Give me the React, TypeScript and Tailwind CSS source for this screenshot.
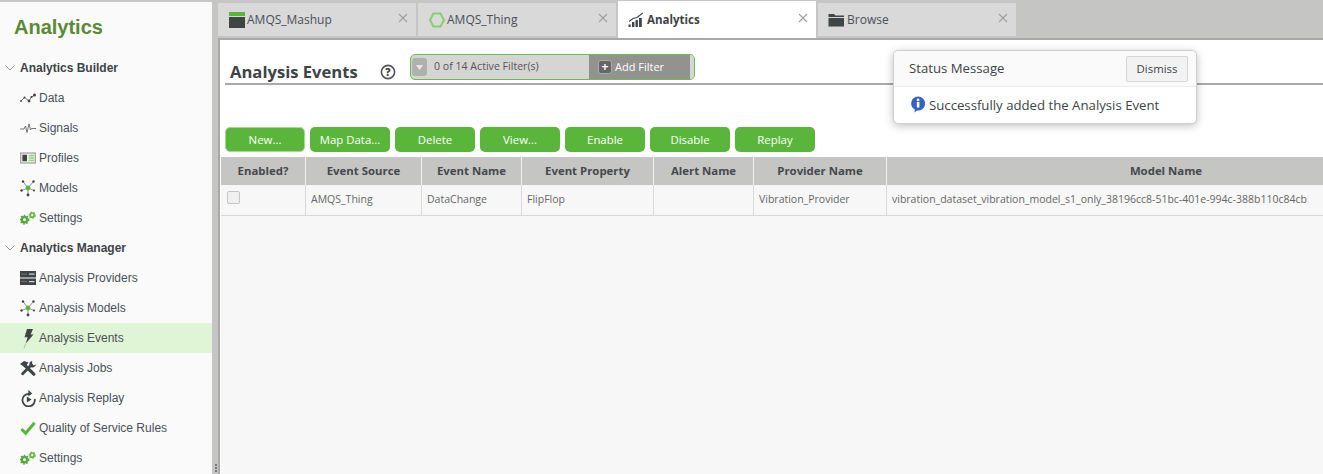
import React from "react";

const G = "#5ab63b";
const D = "#3f4447";

function Gear({ cx, cy, r, c }: { cx: number; cy: number; r: number; c: string }) {
  return (
    <g>
      <circle cx={cx} cy={cy} r={r * 0.62} fill="none" stroke={c} strokeWidth={r * 0.55} />
      <circle cx={cx} cy={cy} r={r * 0.95} fill="none" stroke={c} strokeWidth={r * 0.4} strokeDasharray="1.6 1.6" />
    </g>
  );
}
function Gears() {
  return (
    <svg width="17" height="14" viewBox="0 0 17 14">
      <Gear cx={4.8} cy={8.8} r={4.6} c="#5aa83c" />
      <Gear cx={13} cy={4} r={3.4} c="#6cbb4a" />
    </svg>
  );
}
function Network() {
  return (
    <svg width="16" height="17" viewBox="0 0 16 17">
      <g stroke="#666" strokeWidth="0.7">
        <line x1="8" y1="8" x2="3" y2="1.5" /><line x1="8" y1="8" x2="13.5" y2="1.5" />
        <line x1="8" y1="8" x2="1.5" y2="10.5" /><line x1="8" y1="8" x2="8" y2="15" /><line x1="8" y1="8" x2="14" y2="10.5" />
      </g>
      <circle cx="3" cy="1.5" r="1.2" fill="#444" /><circle cx="13.5" cy="1.5" r="1.2" fill="#444" />
      <circle cx="1.5" cy="10.5" r="1.2" fill="#444" /><circle cx="8" cy="15" r="1.4" fill="#444" /><circle cx="14" cy="10.5" r="1" fill="#444" />
      <circle cx="8" cy="8" r="2.4" fill="#5ab63b" />
    </svg>
  );
}
const icons: Record<string, React.ReactNode> = {
  data: (
    <svg width="16" height="10" viewBox="0 0 16 10">
      <polyline points="1,8 4.5,4.5 9,8 11.5,4 15,2" fill="none" stroke="#666" strokeWidth="0.9" />
      <circle cx="1" cy="8" r="0.9" fill="#444" /><circle cx="4.5" cy="4.5" r="1" fill="#444" />
      <circle cx="9" cy="8" r="1.4" fill="#444" /><circle cx="11.5" cy="4" r="1.1" fill="#444" /><circle cx="14.5" cy="2" r="1.5" fill="#444" />
    </svg>
  ),
  signals: (
    <svg width="16" height="10" viewBox="0 0 16 10">
      <polyline points="0,6 4,6 5.5,3 7,9.5 9,0.8 10.5,7 11.5,5.5 16,5.5" fill="none" stroke="#666" strokeWidth="0.9" />
    </svg>
  ),
  profiles: (
    <svg width="17" height="12" viewBox="0 0 17 12">
      <rect x="0.75" y="0.75" width="15.5" height="10.5" fill="#fff" stroke="#a8a8a8" strokeWidth="1.5" />
      <rect x="2.5" y="2.5" width="5" height="7" fill="#3f4447" />
      <g fill="#8cc474"><rect x="9" y="2.5" width="6" height="1.2" /><rect x="9" y="4.4" width="6" height="1.2" /><rect x="9" y="6.3" width="6" height="1.2" /><rect x="9" y="8.3" width="6" height="1.2" /></g>
    </svg>
  ),
  network: <Network />,
  gears: <Gears />,
  providers: (
    <svg width="16" height="14" viewBox="0 0 16 14">
      <rect width="16" height="6.5" fill={D} />
      <rect y="7.5" width="16" height="6.5" fill={D} />
      <rect x="9" y="2.5" width="5.5" height="1.2" fill="#d8d8d8" />
      <rect x="9" y="10" width="5.5" height="1.2" fill="#d8d8d8" />
      <rect x="1" y="2.7" width="6" height="0.8" fill="#7c8082" />
      <rect x="1" y="10.2" width="6" height="0.8" fill="#7c8082" />
    </svg>
  ),
  events: (
    <svg width="11" height="19" viewBox="0 0 11 19">
      <polygon points="4,0 10,0 7.6,5.5 10.5,5.5 2.8,14.5 4.6,8.2 1.5,8.2" fill={D} />
      <line x1="2.8" y1="14.5" x2="1" y2="19" stroke="#999" strokeWidth="0.6" />
    </svg>
  ),
  jobs: (
    <svg width="16" height="15" viewBox="0 0 16 15">
      <line x1="4.5" y1="4" x2="13.8" y2="13.2" stroke={D} strokeWidth="3.2" strokeLinecap="round" />
      <line x1="11.5" y1="3.8" x2="2.6" y2="12.8" stroke={D} strokeWidth="2.8" strokeLinecap="round" />
      <path d="M0 3 L4 0 L8.5 1.5 L5 6.5 Z" fill={D} />
      <path d="M12.2 0 A3.6 3.6 0 0 0 9.6 4.5 L11.6 6.4 A3.6 3.6 0 0 0 16 3.2 L13.8 4.4 L12 3 Z" fill={D} />
    </svg>
  ),
  replay: (
    <svg width="15" height="18" viewBox="0 0 15 18">
      <path d="M8 4 A6.2 6.2 0 1 0 13.7 9" fill="none" transform="translate(0 1)" stroke={D} strokeWidth="1.8" />
      <polygon points="7.4,1 11.2,4.6 7.4,7.6" fill={D} />
      <polygon points="5.8,7.6 10.6,10.5 5.8,13.4" fill={D} />
    </svg>
  ),
  check: (
    <svg width="16" height="15" viewBox="0 0 17 15">
      <polyline points="1.5,8 6,12.5 15.5,1.5" fill="none" stroke="#5ab63b" strokeWidth="3.2" />
    </svg>
  ),
};

function NavSection({ title }: { title: string }) {
  return (
    <div className="flex h-[30px] items-center pl-[5px] text-[12px] font-bold text-[#3e4347]">
      <svg width="10" height="6" viewBox="0 0 10 6" className="mr-[5px]">
        <polyline points="0.5,0.5 5,5 9.5,0.5" fill="none" stroke="#999" />
      </svg>
      {title}
    </div>
  );
}
function NavItem({ icon, label, active }: { icon: string; label: string; active?: boolean }) {
  return (
    <div className={`flex h-[30px] items-center text-[12px] text-[#4a5058] ${active ? "bg-[#e0f4d6]" : ""}`}>
      <span className="ml-[20px] mr-[3px] flex w-[16px] shrink-0 items-center justify-center">{icons[icon]}</span>
      {label}
    </div>
  );
}

function Tab({ label, icon, active }: { label: string; icon: React.ReactNode; active?: boolean }) {
  return (
    <div
      className={`flex w-[198px] items-center pl-[10px] ${
        active ? "h-[37px] bg-white text-[11.5px] font-bold text-[#3e4347]" : "mt-[2px] h-[33px] bg-[#d9d9d9] text-[12px] text-[#4a5058]"
      }`}
    >
      <span className="mr-[2px] flex w-[17px] shrink-0 items-center justify-center">{icon}</span>
      <span>{label}</span>
      <svg width="10" height="10" viewBox="0 0 10 10" className="ml-auto mr-[8px] mb-[3px]">
        <path d="M1 1 L9 9 M9 1 L1 9" stroke="#a0a0a0" strokeWidth="1.2" />
      </svg>
    </div>
  );
}

const buttons: [string, string][] = [
  ["New...", "border border-[#a5d98f]"],
  ["Map Data...", ""],
  ["Delete", ""],
  ["View...", ""],
  ["Enable", ""],
  ["Disable", ""],
  ["Replay", ""],
];

const cols = [
  ["Enabled?", "w-[85px]", ""],
  ["Event Source", "w-[116px]", "AMQS_Thing"],
  ["Event Name", "w-[100px]", "DataChange"],
  ["Event Property", "w-[132px]", "FlipFlop"],
  ["Alert Name", "w-[100px]", ""],
  ["Provider Name", "w-[133px]", "Vibration_Provider"],
  ["Model Name", "w-[558px]", "vibration_dataset_vibration_model_s1_only_38196cc8-51bc-401e-994c-388b110c84cb"],
];

export default function App() {
  return (
    <div
      className="flex h-[474px] w-[1323px] overflow-hidden bg-[#c5c5c3] pt-[1px]"
      style={{ fontFamily: '"Liberation Sans", Arial, sans-serif' }}
    >
      <aside className="relative mt-[1px] flex w-[212px] shrink-0 flex-col bg-[#fafafa]">
        <h1 className="ml-[14px] mt-[10px] h-[41px] text-[20px] font-bold leading-[30px] text-[#5a8a36]">Analytics</h1>
        <NavSection title="Analytics Builder" />
        <NavItem icon="data" label="Data" />
        <NavItem icon="signals" label="Signals" />
        <NavItem icon="profiles" label="Profiles" />
        <NavItem icon="network" label="Models" />
        <NavItem icon="gears" label="Settings" />
        <NavSection title="Analytics Manager" />
        <NavItem icon="providers" label="Analysis Providers" />
        <NavItem icon="network" label="Analysis Models" />
        <NavItem icon="events" label="Analysis Events" active />
        <NavItem icon="jobs" label="Analysis Jobs" />
        <NavItem icon="replay" label="Analysis Replay" />
        <NavItem icon="check" label="Quality of Service Rules" />
        <NavItem icon="gears" label="Settings" />
        <div className="absolute right-[-5px] bottom-[2px] flex flex-col gap-[1px]">
          <span className="h-[2px] w-[2px] bg-[#777]" /><span className="h-[2px] w-[2px] bg-[#777]" /><span className="h-[2px] w-[2px] bg-[#777]" />
        </div>
      </aside>

      <main className="ml-[6px] flex min-w-0 flex-1 flex-col">
        <div className="flex h-[37px] shrink-0 items-start gap-[2px]" style={{ fontFamily: '"Open Sans", sans-serif' }}>
          <Tab
            label="AMQS_Mashup"
            icon={
              <svg width="16" height="16" viewBox="0 0 16 16">
                <rect width="16" height="4" fill={G} /><rect y="5" width="16" height="11" fill={D} />
              </svg>
            }
          />
          <Tab
            label="AMQS_Thing"
            icon={
              <svg width="16" height="16" viewBox="0 0 16 16">
                <polygon points="4.5,1.5 11.5,1.5 15,8 11.5,14.5 4.5,14.5 1,8" fill="none" stroke="#86cf6b" strokeWidth="2" />
              </svg>
            }
          />
          <Tab
            active
            label="Analytics"
            icon={
              <svg width="17" height="16" viewBox="0 0 17 16">
                <g fill={D}><rect x="0.5" y="12.5" width="2.2" height="2.5" /><rect x="4" y="10" width="2.4" height="5" /><rect x="7.5" y="8" width="2.4" height="7" /><rect x="11" y="6" width="2.8" height="9" /></g>
                <polyline points="1,9.5 5,6.5 9,5.5 14.8,1" fill="none" stroke={D} strokeWidth="1.1" />
              </svg>
            }
          />
          <Tab
            label="Browse"
            icon={
              <svg width="17" height="14" viewBox="0 0 17 14">
                <path d="M0.5 2 L0.5 1 L6 1 L7.5 2.5 L16 2.5 L16 4 L0.5 4 Z" fill={D} /><rect x="0.5" y="5" width="15.5" height="8.5" fill={D} />
              </svg>
            }
          />
        </div>

        <section
          className="relative flex min-h-0 flex-1 flex-col overflow-hidden border-l-[2px] border-t-[2px] border-[#a9a9a9] bg-white"
          style={{ fontFamily: '"Open Sans", sans-serif' }}
        >
          <div className="ml-[5px] flex h-[45px] shrink-0 border-b-[2px] border-[#a9a9a9] pl-[5px]">
            <h2 className="mt-[19px] w-[150px] text-[16.6px] font-bold leading-[25px] text-[#3e4347]">Analysis Events</h2>
            <svg width="16" height="16" viewBox="0 0 16 16" className="mt-[24px]">
              <circle cx="8" cy="8" r="6.6" fill="none" stroke="#555" strokeWidth="1.6" />
              <text x="8" y="11.6" fontSize="10.5" fontWeight="800" fill="#444" textAnchor="middle">?</text>
            </svg>
            <div className="ml-[14px] mt-[14px] flex h-[26px] w-[285px] overflow-hidden rounded-[5px] border border-[#6cbd4f] bg-[#d5d5d3] text-[10.6px]">
              <div className="flex w-[178px] items-center text-[#555]">
                <span className="ml-[1px] flex h-[18px] w-[15px] items-center justify-center rounded-[3px] bg-[#b0b0ae]">
                  <svg width="7" height="5" viewBox="0 0 7 5"><polygon points="0,0 7,0 3.5,5" fill="#e8e8e8" /></svg>
                </span>
                <span className="ml-[7px]">0 of 14 Active Filter(s)</span>
              </div>
              <div className="flex flex-1 items-center bg-[#92928f] pl-[9px] text-[11px] text-white">
                <span className="mr-[3px] flex h-[14px] w-[14px] items-center justify-center rounded-[3px] border border-[#aaa] bg-[#666] text-[12px] font-bold leading-none">+</span>
                Add Filter
              </div>
              <div className="w-[4px] bg-[#d5d5d3]" />
            </div>
          </div>

          <div className="ml-[5px] mt-[42px] flex h-[26px] shrink-0 gap-[5px] text-[11.4px] text-white">
            {buttons.map(([b, c]) => (
              <div key={b} className={`flex h-[25px] w-[80px] items-center justify-center rounded-[5px] bg-[#5ab63b] ${c}`}>
                {b}
              </div>
            ))}
          </div>

          <div className="ml-[1px] mt-[4px] flex min-h-0 flex-1 flex-col bg-[#f7f7f7]">
            <div className="flex h-[28px] shrink-0 bg-[#c5c5c3]">
              {cols.map(([h, w]) => (
                <div key={h} className={`flex shrink-0 items-center justify-center border-r border-[#f2f2f2] pb-[1px] text-[11.4px] font-bold text-[#45494c] last:border-r-0 ${w}`}>
                  {h}
                </div>
              ))}
            </div>
            <div className="flex h-[31px] shrink-0 border-b-[1px] border-[#d8d8d8] bg-[#f7f7f7]">
              {cols.map(([h, w, v], i) => (
                <div key={h} className={`flex shrink-0 items-center border-r border-[#d8d8d8] pl-[5px] text-[10.5px] text-[#666] last:border-r-0 ${w}`}>
                  {i === 0 ? <span className="mb-[5px] ml-[1px] h-[13px] w-[13px] rounded-[2px] border border-[#c4c4c4] bg-[#f0f0f0]" /> : v}
                </div>
              ))}
            </div>
          </div>

          <div className="absolute left-[673px] top-[10px] h-[74px] w-[304px] rounded-[5px] border border-[#cfcfcf] bg-white shadow-[0_2px_8px_rgba(0,0,0,0.25)]">
            <div className="flex h-[36px] items-center justify-between rounded-t-[5px] border-b border-[#ececec] bg-[#fafafa] pl-[15px] pr-[8px] text-[13.2px] text-[#3e4347]">
              Status Message
              <span className="flex h-[26px] w-[62px] items-center justify-center rounded-[2px] border border-[#d5d5d5] bg-[#f2f2f2] text-[11.4px]">Dismiss</span>
            </div>
            <div className="flex h-[37px] items-center pl-[16px] text-[13.2px] text-[#3e4347]">
              <svg width="16" height="17" viewBox="0 0 16 17" className="mr-[3px] mb-[3px]">
                <path d="M8 0.5 A7 7 0 1 1 7 14.4 L4.5 16.5 L4.8 13.6 A7 7 0 0 1 8 0.5 Z" fill="#3461c4" />
                <rect x="6.8" y="6" width="2.6" height="5.5" fill="#fff" /><circle cx="8.1" cy="3.9" r="1.4" fill="#fff" />
              </svg>
              Successfully added the Analysis Event
            </div>
          </div>
        </section>
      </main>
    </div>
  );
}
